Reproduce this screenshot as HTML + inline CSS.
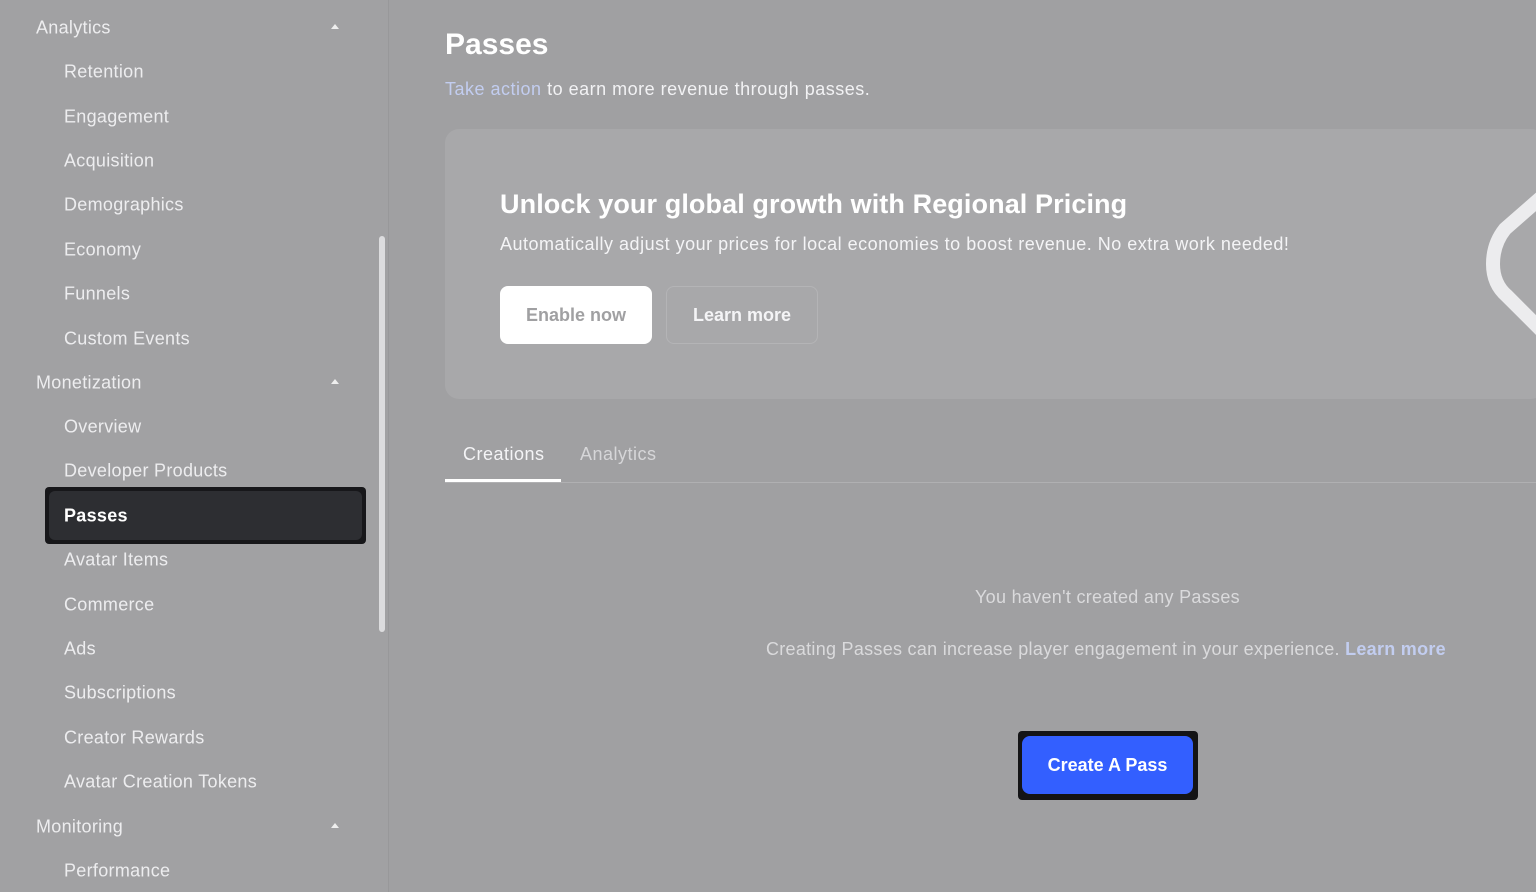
<!DOCTYPE html>
<html><head><meta charset="utf-8"><style>
*{margin:0;padding:0;box-sizing:border-box}
body{width:1536px;height:892px;overflow:hidden;background:#a0a0a2;font-family:"Liberation Sans",sans-serif;position:relative;color:#f0f0f2}
.sb{position:absolute;left:0;top:0;width:389px;height:892px;border-right:1px solid #98989a;background:#a1a1a3}
.it{position:absolute;font-size:18px;color:#ededef;white-space:nowrap;transform:translateY(-50%);letter-spacing:.3px}
.h{left:36px}.s{left:64px}
.car{position:absolute;left:331px;width:0;height:0;border-left:4px solid transparent;border-right:4px solid transparent;border-bottom:5px solid #eee}
.sel{position:absolute;left:45px;top:487px;width:321px;height:57px;background:#17171a;border-radius:4px}
.sel div{position:absolute;left:4px;top:4px;right:4px;bottom:4px;background:#2d2e32;border-radius:6px}
.scr{position:absolute;left:379px;top:236px;width:6px;height:396px;background:#dcdcde;border-radius:3px}
.t{position:absolute;white-space:nowrap}
.r{letter-spacing:.5px}
.card{position:absolute;left:445px;top:129px;width:1100px;height:270px;background:#a8a8aa;border-radius:14px;overflow:hidden}
.btn{position:absolute;height:58px;border-radius:8px;font-size:18px;font-weight:bold;display:flex;align-items:center;justify-content:center}
</style></head><body>
<div class="sb">
<div class="sel"><div></div></div>
<div class="it h" style="top:28px">Analytics</div><div class="car" style="top:24px"></div>
<div class="it s" style="top:72px">Retention</div>
<div class="it s" style="top:117px">Engagement</div>
<div class="it s" style="top:161px">Acquisition</div>
<div class="it s" style="top:205px">Demographics</div>
<div class="it s" style="top:250px">Economy</div>
<div class="it s" style="top:294px">Funnels</div>
<div class="it s" style="top:339px">Custom Events</div>
<div class="it h" style="top:383px">Monetization</div><div class="car" style="top:379px"></div>
<div class="it s" style="top:427px">Overview</div>
<div class="it s" style="top:471px">Developer Products</div>
<div class="it s" style="top:516px;color:#fff;font-weight:bold">Passes</div>
<div class="it s" style="top:560px">Avatar Items</div>
<div class="it s" style="top:605px">Commerce</div>
<div class="it s" style="top:649px">Ads</div>
<div class="it s" style="top:693px">Subscriptions</div>
<div class="it s" style="top:738px">Creator Rewards</div>
<div class="it s" style="top:782px">Avatar Creation Tokens</div>
<div class="it h" style="top:827px">Monitoring</div><div class="car" style="top:823px"></div>
<div class="it s" style="top:871px">Performance</div>
<div class="scr"></div>
</div>

<div class="t" style="left:445px;top:28px;font-size:30px;font-weight:bold;color:#fff">Passes</div>
<div class="t r" style="left:445px;top:79px;font-size:18px;color:#f2f2f4"><span style="color:#c2cdf0">Take action</span> to earn more revenue through passes.</div>

<div class="card">
<div class="t" style="left:55px;top:60px;font-size:27px;font-weight:bold;color:#fff;letter-spacing:.1px">Unlock your global growth with Regional Pricing</div>
<div class="t r" style="left:55px;top:105px;font-size:18px;color:#f4f4f6">Automatically adjust your prices for local economies to boost revenue. No extra work needed!</div>
<div class="btn" style="left:55px;top:157px;width:152px;background:#fff;color:#a0a0a2">Enable now</div>
<div class="btn" style="left:221px;top:157px;width:152px;border:1px solid #b4b4b6;color:#f4f4f6">Learn more</div>
<svg style="position:absolute;left:1040px;top:55px" width="80" height="170"><path d="M60 10 L20 45 Q8 60 8 80 Q8 100 22 112 L60 150" fill="none" stroke="#ececee" stroke-width="14" stroke-linejoin="round"/><path d="M75 50 Q55 70 60 100" fill="none" stroke="#ececee" stroke-width="10"/></svg>
</div>

<div class="t r" style="left:463px;top:444px;font-size:18px;color:#f4f4f6">Creations</div>
<div class="t r" style="left:580px;top:444px;font-size:18px;color:#d6d6d8">Analytics</div>
<div style="position:absolute;left:445px;top:482px;width:1091px;height:1px;background:#b0b0b2"></div>
<div style="position:absolute;left:445px;top:479px;width:116px;height:3px;background:#fff"></div>

<div class="t" style="left:975px;top:587px;font-size:18px;color:#dadadc;letter-spacing:.3px">You haven't created any Passes</div>
<div class="t" style="left:766px;top:639px;font-size:18px;color:#dadadc;letter-spacing:.28px">Creating Passes can increase player engagement in your experience. <span style="color:#c2cdf0;font-weight:bold">Learn more</span></div>

<div style="position:absolute;left:1018px;top:731px;width:180px;height:69px;background:#141416;border-radius:4px"></div>
<div class="btn" style="left:1022px;top:736px;width:171px;height:58px;background:#335fff;color:#fff;border-radius:8px">Create A Pass</div>
</body></html>
